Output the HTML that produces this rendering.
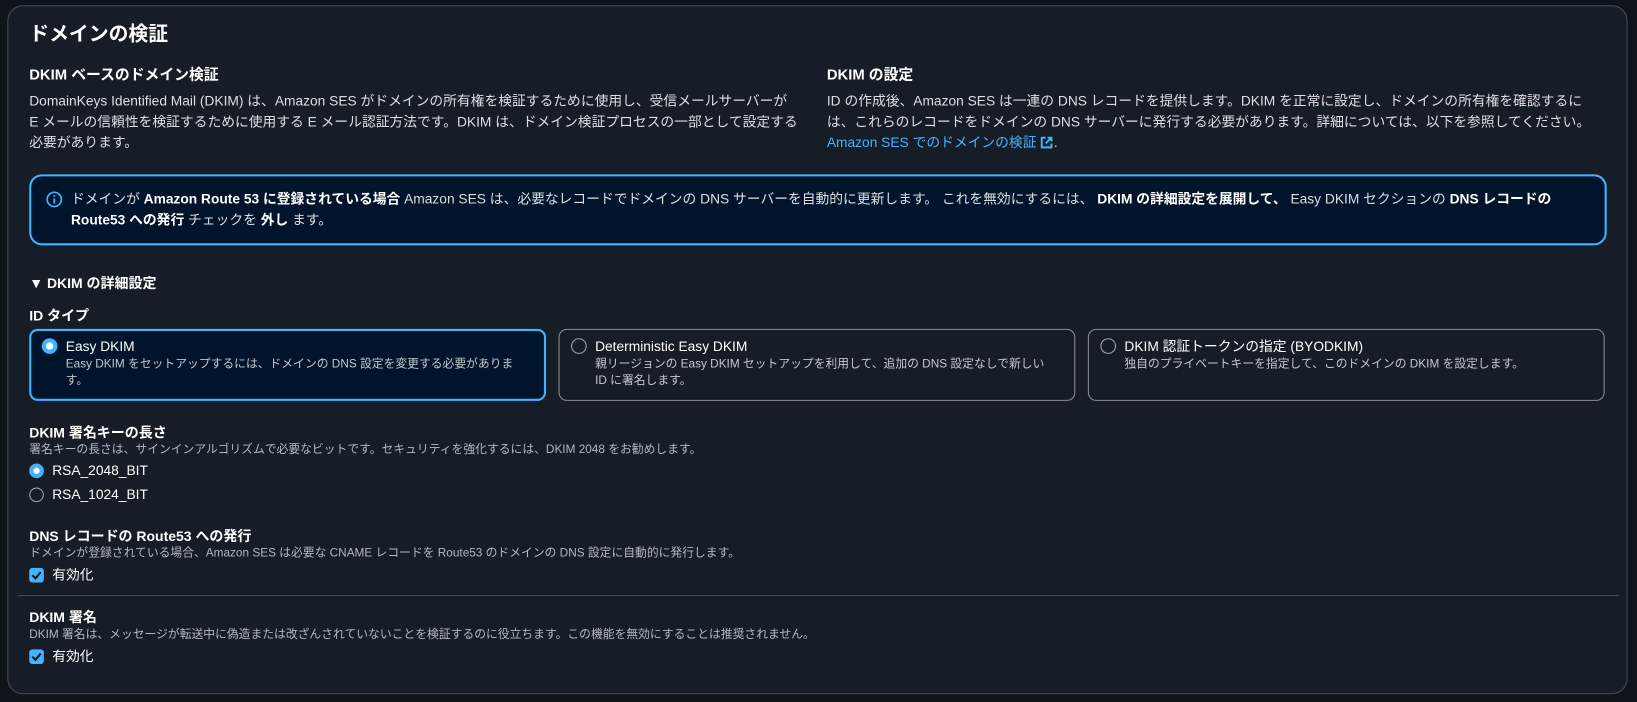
<!DOCTYPE html>
<html><head><meta charset="utf-8"><style>
*{box-sizing:border-box;margin:0;padding:0}
body{width:1637px;height:702px;background:#0f141a;font-family:"Liberation Sans","Noto Sans CJK JP",sans-serif;color:#dedee3;overflow:hidden}
#w{position:absolute;left:0;top:0;width:1568px;height:672px;transform:scale(1.044);transform-origin:0 0;font-size:13.2px}
.c{position:absolute;left:6.7px;top:4.8px;width:1552px;height:660px;background:#161d26;border:1px solid #414d5c;border-radius:15px}
.a{position:absolute;white-space:nowrap}
h1{font-size:19px;font-weight:bold;color:#fff}
.h{font-size:14.2px;font-weight:bold;color:#fff}
.t{font-size:13.2px;line-height:20px;color:#dedee3}
.s{font-size:11.3px;line-height:16px;color:#b4b8c0}
.info{position:absolute;left:28px;top:167px;width:1511px;height:68px;background:#00142b;border:2px solid #42b4ff;border-radius:12px}
.card{position:absolute;top:315px;width:495px;height:69px;border:1px solid #8c8c94;border-radius:8px}
.card.sel{background:#00142b;border:2px solid #42b4ff}
.r{position:absolute;width:15px;height:15px;border-radius:50%;border:1.5px solid #a0a6ae}
.r.on{border:4px solid #42b4ff;background:#fff}
.cb{position:absolute;width:14px;height:14px;background:#42b4ff;border-radius:3px}
a{color:#42b4ff;text-decoration:none}
b{color:#fff}
</style></head><body><div id="w">
<div class="c"></div>
<h1 class="a" style="left:28px;top:18px">ドメインの検証</h1>
<div class="a h" style="left:28px;top:61px">DKIM ベースのドメイン検証</div>
<div class="a t" style="left:28px;top:87px">DomainKeys Identified Mail (DKIM) は、Amazon SES がドメインの所有権を検証するために使用し、受信メールサーバーが<br>E メールの信頼性を検証するために使用する E メール認証方法です。DKIM は、ドメイン検証プロセスの一部として設定する<br>必要があります。</div>
<div class="a h" style="left:792px;top:61px">DKIM の設定</div>
<div class="a t" style="left:792px;top:87px">ID の作成後、Amazon SES は一連の DNS レコードを提供します。DKIM を正常に設定し、ドメインの所有権を確認するに<br>は、これらのレコードをドメインの DNS サーバーに発行する必要があります。詳細については、以下を参照してください。<br><a>Amazon SES でのドメインの検証 <svg width="13" height="13" viewBox="0 0 14 14" style="vertical-align:-2px"><path d="M6 2H2v10h10V8M8 2h4v4M12 2L6 8" fill="none" stroke="#42b4ff" stroke-width="2"/></svg></a>.</div>
<div class="info"></div>
<svg class="a" style="left:44px;top:183px" width="16" height="16" viewBox="0 0 16 16"><circle cx="8" cy="8" r="6.8" fill="none" stroke="#42b4ff" stroke-width="1.6"/><path d="M8 7v5M8 4v1.6" stroke="#42b4ff" stroke-width="1.8"/></svg>
<div class="a t" style="left:68px;top:181px">ドメインが <b>Amazon Route 53 に登録されている場合</b> Amazon SES は、必要なレコードでドメインの DNS サーバーを自動的に更新します。 これを無効にするには、 <b>DKIM の詳細設定を展開して、</b> Easy DKIM セクションの <b>DNS レコードの</b><br><b>Route53 への発行</b> チェックを <b>外し</b> ます。</div>
<div class="a h" style="left:28px;top:260px;font-size:13.4px">▼ DKIM の詳細設定</div>
<div class="a h" style="left:28px;top:291px;font-size:13.4px">ID タイプ</div>
<div class="card sel" style="left:28px"></div>
<div class="card" style="left:535px"></div>
<div class="card" style="left:1042px"></div>
<div class="r on" style="left:40px;top:324px"></div>
<div class="a t" style="left:63px;top:322px;color:#fff">Easy DKIM</div>
<div class="a s" style="left:63px;top:341px;color:#c6c6cd">Easy DKIM をセットアップするには、ドメインの DNS 設定を変更する必要がありま<br>す。</div>
<div class="r" style="left:547px;top:324px"></div>
<div class="a t" style="left:570px;top:322px;color:#fff">Deterministic Easy DKIM</div>
<div class="a s" style="left:570px;top:341px;color:#c6c6cd">親リージョンの Easy DKIM セットアップを利用して、追加の DNS 設定なしで新しい<br>ID に署名します。</div>
<div class="r" style="left:1054px;top:324px"></div>
<div class="a t" style="left:1077px;top:322px;color:#fff">DKIM 認証トークンの指定 (BYODKIM)</div>
<div class="a s" style="left:1077px;top:341px;color:#c6c6cd">独自のプライベートキーを指定して、このドメインの DKIM を設定します。</div>
<div class="a h" style="left:28px;top:403px;font-size:13.4px">DKIM 署名キーの長さ</div>
<div class="a s" style="left:28px;top:423px">署名キーの長さは、サインインアルゴリズムで必要なビットです。セキュリティを強化するには、DKIM 2048 をお勧めします。</div>
<div class="r on" style="left:28px;top:444px;width:14px;height:14px"></div>
<div class="a t" style="left:50px;top:441px;color:#fff">RSA_2048_BIT</div>
<div class="r" style="left:28px;top:467px;width:14px;height:14px"></div>
<div class="a t" style="left:50px;top:464px;color:#fff">RSA_1024_BIT</div>
<div class="a h" style="left:28px;top:502px;font-size:13.4px">DNS レコードの Route53 への発行</div>
<div class="a s" style="left:28px;top:522px">ドメインが登録されている場合、Amazon SES は必要な CNAME レコードを Route53 のドメインの DNS 設定に自動的に発行します。</div>
<div class="cb" style="left:28px;top:544px"></div>
<svg class="a" style="left:28px;top:544px" width="14" height="14"><path d="M3 7l3 3 5-6" fill="none" stroke="#0f141a" stroke-width="2"/></svg>
<div class="a t" style="left:50px;top:541px;color:#fff">有効化</div>
<div class="a" style="left:17px;top:570px;width:1534px;height:1px;background:#414d5c"></div>
<div class="a h" style="left:28px;top:580px;font-size:13.4px">DKIM 署名</div>
<div class="a s" style="left:28px;top:600px">DKIM 署名は、メッセージが転送中に偽造または改ざんされていないことを検証するのに役立ちます。この機能を無効にすることは推奨されません。</div>
<div class="cb" style="left:28px;top:622px"></div>
<svg class="a" style="left:28px;top:622px" width="14" height="14"><path d="M3 7l3 3 5-6" fill="none" stroke="#0f141a" stroke-width="2"/></svg>
<div class="a t" style="left:50px;top:619px;color:#fff">有効化</div>
</div></body></html>
